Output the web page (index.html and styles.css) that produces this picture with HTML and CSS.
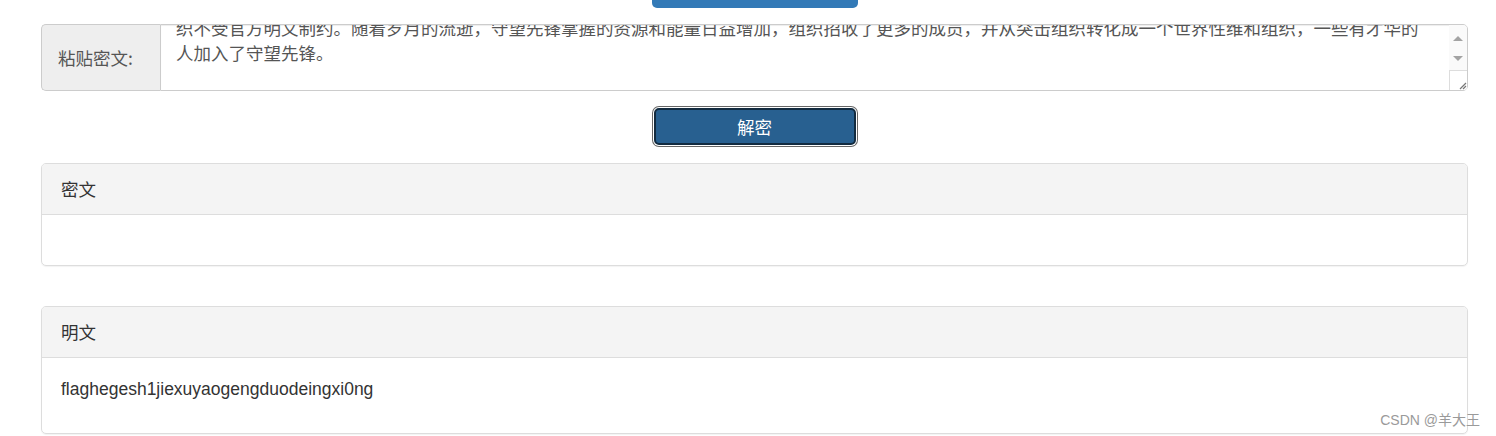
FILE: index.html
```html
<!DOCTYPE html>
<html lang="zh-CN">
<head>
<meta charset="utf-8">
<title>解密</title>
<link rel="stylesheet" href="styles.css">
</head>
<body>
<div class="page">
  <div class="top-row"><div class="top-btn"></div></div>
  <div class="input-group">
    <div class="addon">粘贴密文:</div>
    <div class="textarea">
      <div class="ta-scroll">
        <div class="ta-text">织不受官方明文制约。随着岁月的流逝，守望先锋掌握的资源和能量日益增加，组织招收了更多的成员，并从突击组织转化成一个世界性维和组织，一些有才华的<br>人加入了守望先锋。</div>
      </div>
      <div class="scrollbar">
        <div class="sb-arrows">
          <span class="arrow up"></span>
          <span class="arrow down"></span>
        </div>
        <div class="resizer">
          <svg width="10" height="10" viewBox="0 0 10 10"><path d="M9 3 L3 9 M9 6 L6 9" stroke="#777" stroke-width="1.2" fill="none"/></svg>
        </div>
      </div>
    </div>
  </div>
  <div class="btn-row"><button class="btn-decrypt">解密</button></div>
  <div class="panel">
    <div class="panel-heading">密文</div>
    <div class="panel-body"><p class="para"></p></div>
  </div>
  <div class="panel">
    <div class="panel-heading">明文</div>
    <div class="panel-body"><p class="para">flaghegesh1jiexuyaogengduodeingxi0ng</p></div>
  </div>
</div>
<div class="watermark">CSDN @羊大王</div>
</body>
</html>
```

FILE: styles.css
```css
html, body {
  margin: 0;
  padding: 0;
  background: #fff;
}
body {
  font-family: "Liberation Sans", Arial, "Noto Sans CJK SC", sans-serif;
  font-size: 17.5px;
  line-height: 25px;
  color: #333;
  width: 1496px;
  height: 436px;
  overflow: hidden;
  position: relative;
}
.page {
  margin-left: 41px;
  width: 1427px;
}
.top-row {
  display: flex;
  justify-content: center;
  height: 8px;
}
.top-btn {
  width: 206px;
  height: 8px;
  background: #337ab7;
  border-radius: 0 0 5px 5px;
}
.input-group {
  display: flex;
  margin-top: 16px;
  height: 67px;
}
.addon {
  width: 119px;
  box-sizing: border-box;
  background: #eee;
  border: 1px solid #ccc;
  border-right: 0;
  border-radius: 5px 0 0 5px;
  color: #555;
  display: flex;
  align-items: center;
  padding-left: 16px;
  font-family: "Noto Sans CJK SC", sans-serif;
  font-size: 17.5px;
}
.textarea {
  flex: 1;
  display: flex;
  border: 1px solid #ccc;
  border-radius: 0 5px 5px 0;
  box-shadow: inset 0 1px 1px rgba(0,0,0,.075);
  overflow: hidden;
}
.ta-scroll {
  flex: 1;
  overflow: hidden;
  padding: 7px 10px 0 15px;
}
.ta-text {
  margin-top: -17px;
  color: #555;
  font-family: "Noto Sans CJK SC", sans-serif;
  font-size: 17.5px;
  line-height: 25px;
  white-space: nowrap;
}
.scrollbar {
  width: 18px;
  display: flex;
  flex-direction: column;
  background: #fafafa;
}
.sb-arrows {
  flex: 1;
  display: flex;
  flex-direction: column;
  align-items: center;
  justify-content: space-around;
  padding: 4px 0 2px;
}
.arrow {
  width: 0;
  height: 0;
  border-left: 5px solid transparent;
  border-right: 5px solid transparent;
}
.arrow.up { border-bottom: 5px solid #a3a3a3; }
.arrow.down { border-top: 5px solid #a3a3a3; }
.resizer {
  height: 19px;
  border-top: 1px solid #ddd;
  border-left: 1px solid #ddd;
  background: #fff;
  display: flex;
  align-items: flex-end;
  justify-content: flex-end;
}
.btn-row {
  display: flex;
  justify-content: center;
  margin-top: 17px;
  height: 37px;
  margin-bottom: 18px;
}
.btn-decrypt {
  width: 202px;
  height: 37px;
  box-sizing: border-box;
  background: #286090;
  color: #fff;
  border: 2px solid #122b40;
  border-radius: 5px;
  box-shadow: 0 0 0 1px #fff, 0 0 0 2px #666;
  font-family: "Noto Sans CJK SC", sans-serif;
  font-size: 17.5px;
  line-height: 25px;
  padding: 0;
}
.panel {
  border: 1px solid #ddd;
  border-radius: 5px;
  box-shadow: 0 1px 1px rgba(0,0,0,.05);
  overflow: hidden;
}
.panel + .panel {
  margin-top: 40px;
}
.panel-heading {
  background: #f4f4f4;
  border-bottom: 1px solid #ddd;
  padding: 12px 19px 13px;
  font-family: "Noto Sans CJK SC", sans-serif;
  font-size: 17.5px;
  line-height: 25px;
}
.panel-body {
  padding: 19px 19px 19px;
}
.para {
  margin: 0 0 12px;
  font-size: 17.5px;
  line-height: 25px;
}
.watermark {
  position: absolute;
  right: 16px;
  bottom: 3px;
  font-family: "Liberation Sans", Arial, "Noto Sans CJK SC", sans-serif;
  font-size: 14px;
  color: #9a9a9a;
}
```
